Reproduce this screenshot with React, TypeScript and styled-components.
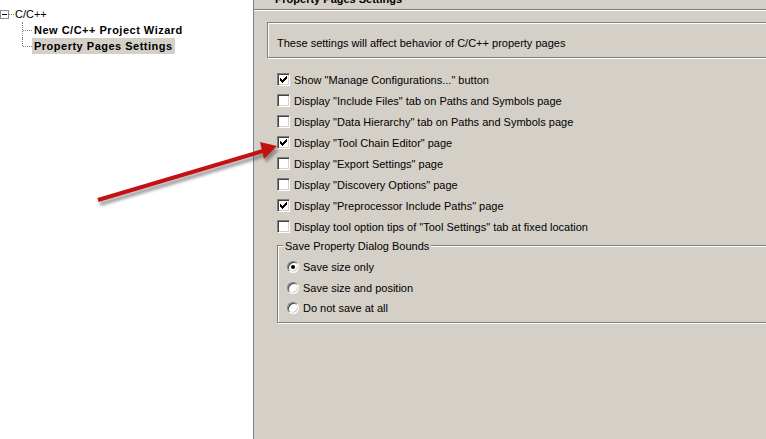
import React from 'react'
import styled, { createGlobalStyle } from 'styled-components'

const GlobalStyle = createGlobalStyle`
  html, body { margin: 0; padding: 0; }
  body {
    font-family: "Liberation Sans", Arial, sans-serif;
    font-size: 11px;
    color: #000;
    background: #fff;
  }
`

const Window = styled.div`
  position: relative;
  display: flex;
  width: 766px;
  height: 439px;
  overflow: hidden;
`

/* ---------- tree on the left ---------- */

const TreePane = styled.div`
  flex: none;
  width: 254px;
  box-sizing: border-box;
  padding-top: 6px;
  background: #fff;
  border-right: 1px solid #808080;
`

const TreeRow = styled.div`
  display: flex;
  align-items: center;
  height: 16px;
  white-space: nowrap;
`

const Expander = styled.span`
  position: relative;
  flex: none;
  width: 9px;
  height: 9px;
  box-sizing: border-box;
  border: 1px solid #8a8a8a;
  background: #fff;

  &::after {
    content: '';
    position: absolute;
    left: 1px;
    top: 3px;
    width: 5px;
    height: 1px;
    background: #000;
  }
`

const Stub = styled.span`
  flex: none;
  width: 5px;
  border-top: 1px dotted #808080;
`

const RootLabel = styled.span`
  padding-left: 1px;
  line-height: 16px;
`

const ChildList = styled.div`
  margin-left: 22px;
`

const Connector = styled.span<{ $last?: boolean }>`
  position: relative;
  flex: none;
  width: 10px;
  align-self: stretch;

  &::before {
    content: '';
    position: absolute;
    left: 0;
    top: 0;
    bottom: ${p => (p.$last ? '50%' : '0')};
    border-left: 1px dotted #808080;
  }

  &::after {
    content: '';
    position: absolute;
    left: 1px;
    right: 0;
    top: 50%;
    border-top: 1px dotted #808080;
  }
`

const NodeLabel = styled.span<{ $selected?: boolean }>`
  padding: 0 2px;
  line-height: 16px;
  font-weight: bold;
  letter-spacing: 0.5px;
  background: ${p => (p.$selected ? '#d4d0c8' : 'transparent')};
`

/* ---------- settings page on the right ---------- */

const SettingsPane = styled.div`
  flex: 1;
  min-width: 0;
  background: #d4d0c8;
  overflow: hidden;
`

const PageHeader = styled.div`
  height: 9px;
  padding-left: 21px;
  overflow: hidden;
  border-bottom: 1px solid #808080;
  box-shadow: 0 1px 0 #fff;
`

const PageTitle = styled.div`
  margin-top: -7px;
  line-height: 13px;
  font-weight: bold;
  white-space: nowrap;
`

const PageBody = styled.div`
  padding: 12px 0 0 13px;
`

const DescriptionBox = styled.div`
  margin-right: -30px;
  padding: 14px 9px 7px;
  line-height: 13px;
  white-space: nowrap;
  border: 1px solid #808080;
  box-shadow: inset 1px 1px 0 #fff, 1px 1px 0 #fff;
`

const OptionList = styled.div`
  margin-top: 11px;
`

const CheckRow = styled.label`
  display: flex;
  align-items: center;
  gap: 4px;
  height: 21px;
  padding-left: 10px;
  white-space: nowrap;
`

const CheckBox = styled.span`
  display: flex;
  align-items: center;
  justify-content: center;
  flex: none;
  width: 13px;
  height: 13px;
  box-sizing: border-box;
  background: #fff;
  border: 1px solid;
  border-color: #808080 #fff #fff #808080;
  box-shadow: inset 1px 1px 0 #404040, inset -1px -1px 0 #d4d0c8;
`

const Group = styled.div`
  margin: 8px -30px 0 10px;
  padding: 0 0 3.5px 0;
  border: 1px solid #808080;
  box-shadow: inset 1px 1px 0 #fff, 1px 1px 0 #fff;
`

const GroupTitle = styled.div`
  display: table;
  margin: -6px 0 0 5px;
  padding: 0 2px;
  line-height: 13px;
  background: #d4d0c8;
`

const RadioList = styled.div`
  padding-top: 4px;
`

const RadioRow = styled.label`
  display: flex;
  align-items: center;
  gap: 4px;
  height: 20.5px;
  padding-left: 9px;
  white-space: nowrap;
`

const RadioButton = styled.span<{ $checked?: boolean }>`
  position: relative;
  flex: none;
  width: 12px;
  height: 12px;
  box-sizing: border-box;
  border-radius: 50%;
  background: #fff;
  border: 1px solid;
  border-color: #808080 #fff #fff #808080;
  box-shadow: inset 1px 1px 0 #404040, inset -1px -1px 0 #d4d0c8;

  &::after {
    content: '';
    display: ${p => (p.$checked ? 'block' : 'none')};
    position: absolute;
    left: 3px;
    top: 3px;
    width: 4px;
    height: 4px;
    border-radius: 50%;
    background: #000;
  }
`

const ArrowLayer = styled.svg`
  position: absolute;
  left: 0;
  top: 0;
  pointer-events: none;
`

const options = [
  { text: 'Show "Manage Configurations..." button', checked: true },
  { text: 'Display "Include Files" tab on Paths and Symbols page', checked: false },
  { text: 'Display "Data Hierarchy" tab on Paths and Symbols page', checked: false },
  { text: 'Display "Tool Chain Editor" page', checked: true },
  { text: 'Display "Export Settings" page', checked: false },
  { text: 'Display "Discovery Options" page', checked: false },
  { text: 'Display "Preprocessor Include Paths" page', checked: true },
  { text: 'Display tool option tips of "Tool Settings" tab at fixed location', checked: false },
]

const bounds = ['Save size only', 'Save size and position', 'Do not save at all']

const CheckMark = () => (
  <svg width="7" height="7" viewBox="0 0 7 7" shapeRendering="crispEdges">
    <path d="M6 0H7V3H6V4H5V5H4V6H3V7H2V6H1V5H0V2H1V3H2V4H3V3H4V2H5V1H6Z" fill="#000" />
  </svg>
)

const Arrow = () => (
  <ArrowLayer width="766" height="439" viewBox="0 0 766 439">
    <defs>
      <filter id="arrow-shadow" x="-10%" y="-30%" width="120%" height="160%">
        <feGaussianBlur stdDeviation="1.8" />
      </filter>
    </defs>
    <g filter="url(#arrow-shadow)" opacity="0.5" transform="translate(2 4)">
      <line x1="98" y1="200" x2="263" y2="151" stroke="#444" strokeWidth="4" />
      <polygon points="277,146 260,142 264,159" fill="#444" />
    </g>
    <line x1="98" y1="200" x2="263" y2="151" stroke="#c41212" strokeWidth="4" />
    <polygon points="277,146 260,142 264,159" fill="#c41212" />
  </ArrowLayer>
)

export default function App() {
  return (
    <>
      <GlobalStyle />
      <Window>
        <TreePane>
          <TreeRow>
            <Expander />
            <Stub />
            <RootLabel>C/C++</RootLabel>
          </TreeRow>
          <ChildList>
            <TreeRow>
              <Connector />
              <NodeLabel>New C/C++ Project Wizard</NodeLabel>
            </TreeRow>
            <TreeRow>
              <Connector $last />
              <NodeLabel $selected>Property Pages Settings</NodeLabel>
            </TreeRow>
          </ChildList>
        </TreePane>

        <SettingsPane>
          <PageHeader>
            <PageTitle>Property Pages Settings</PageTitle>
          </PageHeader>
          <PageBody>
            <DescriptionBox>These settings will affect behavior of C/C++ property pages</DescriptionBox>
            <OptionList>
              {options.map(o => (
                <CheckRow key={o.text}>
                  <CheckBox>{o.checked && <CheckMark />}</CheckBox>
                  {o.text}
                </CheckRow>
              ))}
            </OptionList>
            <Group>
              <GroupTitle>Save Property Dialog Bounds</GroupTitle>
              <RadioList>
                {bounds.map((b, i) => (
                  <RadioRow key={b}>
                    <RadioButton $checked={i === 0} />
                    {b}
                  </RadioRow>
                ))}
              </RadioList>
            </Group>
          </PageBody>
        </SettingsPane>

        <Arrow />
      </Window>
    </>
  )
}
